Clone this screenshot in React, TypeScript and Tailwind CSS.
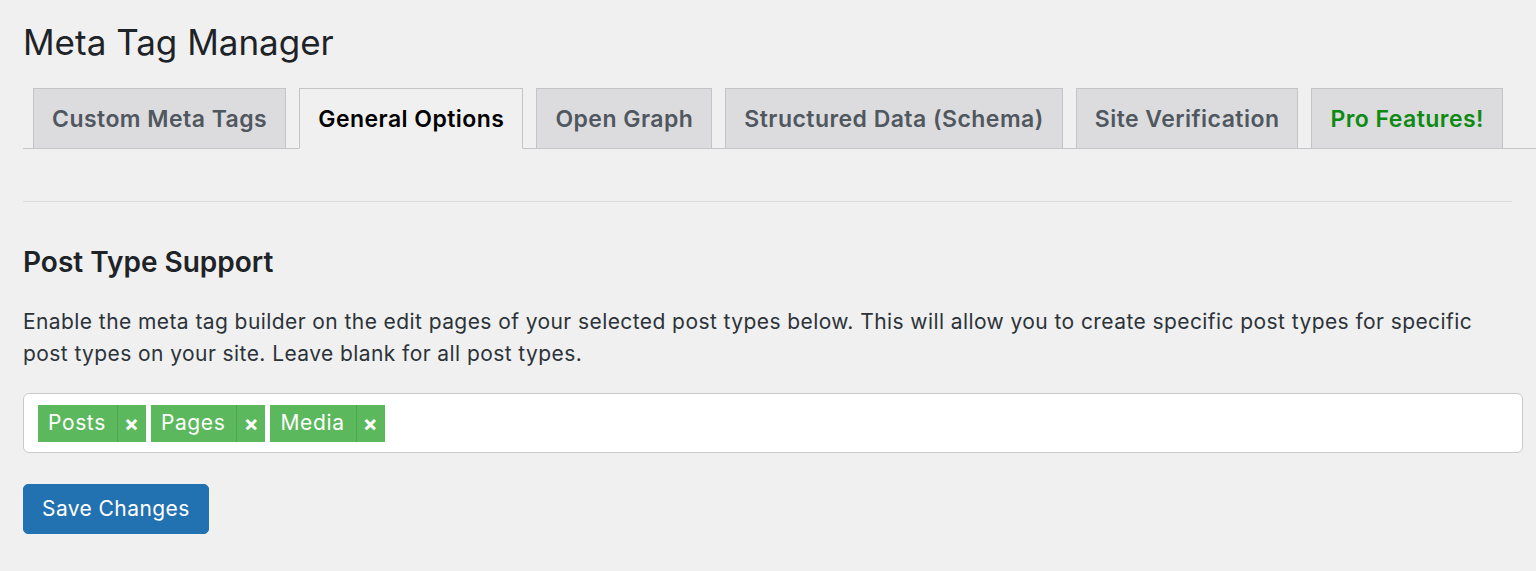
import { useState } from 'react'

const tabs = [
  'Custom Meta Tags',
  'General Options',
  'Open Graph',
  'Structured Data (Schema)',
  'Site Verification',
  'Pro Features!',
]

const font = { fontFamily: 'Inter, "Noto Sans", sans-serif' }

function Tag({ label, onRemove }: { label: string; onRemove: () => void }) {
  return (
    <span className="flex h-[37px] items-stretch bg-[#5cb85c] text-[21px] tracking-[0.03em] text-white">
      <span className="flex items-center pr-[11px] pl-[10px]">{label}</span>
      <button
        type="button"
        onClick={onRemove}
        className="flex w-[29px] items-center justify-center border-l border-[#4ea64e] text-[22px] leading-none font-bold"
      >
        ×
      </button>
    </span>
  )
}

export default function App() {
  const [active, setActive] = useState(1)
  const [types, setTypes] = useState(['Posts', 'Pages', 'Media'])

  return (
    <div className="min-h-[571px] bg-[#f0f0f1] text-[#1d2327]" style={font}>
      <div className="pl-[23px]">
        <h1 className="pt-[18px] text-[35px] leading-[48px] font-normal">Meta Tag Manager</h1>

        <nav className="mt-[22px] flex gap-[13px] border-b border-[#c3c4c7] pl-[10px]">
          {tabs.map((tab, i) => {
            const isActive = i === active
            const isPro = tab === 'Pro Features!'
            return (
              <button
                key={tab}
                type="button"
                onClick={() => setActive(i)}
                className={
                  'mb-[-1px] flex h-[61px] items-center border px-[18px] pt-[2px] text-[23px] tracking-[0.02em] font-semibold ' +
                  (isActive
                    ? 'border-[#c3c4c7] border-b-[#f0f0f1] bg-[#f0f0f1] text-black'
                    : 'border-[#c3c4c7] bg-[#dcdcde] ') +
                  (!isActive && isPro ? 'text-[#0d8a12]' : !isActive ? 'text-[#50575e]' : '')
                }
              >
                {tab}
              </button>
            )
          })}
        </nav>

        <div className="w-[1500px]">
          <hr className="mt-[52px] mr-[11px] border-t border-[#dcdcde]" />

          <h2 className="mt-[43px] text-[28px] leading-[34px] font-semibold">Post Type Support</h2>

          <p className="mt-[27px] text-[21px] leading-[32px] tracking-[0.02em] text-[#2c3338]">
            Enable the meta tag builder on the edit pages of your selected post types below. This will allow you to create specific post types for specific
            <br />
            post types on your site. Leave blank for all post types.
          </p>

          <div className="mt-[23px] flex h-[60px] items-center gap-[5px] rounded-[6px] border border-[#c9cacd] bg-white px-[14px]">
            {types.map((t) => (
              <Tag key={t} label={t} onRemove={() => setTypes(types.filter((x) => x !== t))} />
            ))}
          </div>

          <button
            type="button"
            className="mt-[31px] h-[50px] rounded-[5px] border border-[#2271b1] bg-[#2271b1] px-[18px] text-[21px] tracking-[0.02em] text-white"
          >
            Save Changes
          </button>
        </div>
      </div>
    </div>
  )
}
